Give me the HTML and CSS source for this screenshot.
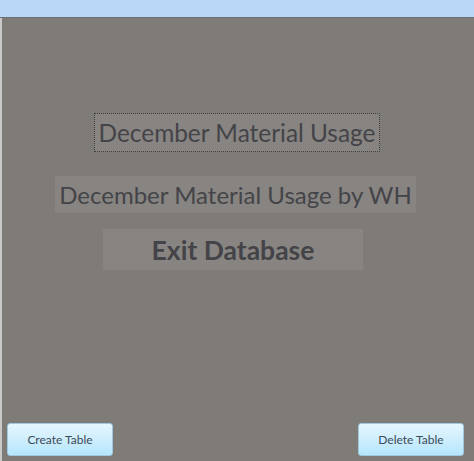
FILE: index.html
```html
<!DOCTYPE html>
<html>
<head>
<meta charset="utf-8">
<link rel="stylesheet" href="styles.css">
</head>
<body>
<div class="titlebar"></div>
<div class="main">
  <div class="menu">
    <div class="menu-btn focused first">December Material Usage</div>
    <div class="menu-btn second">December Material Usage by WH</div>
    <div class="menu-btn exit">Exit Database</div>
  </div>
  <div class="footer">
    <div class="cmd-btn">Create Table</div>
    <div class="cmd-btn">Delete Table</div>
  </div>
</div>
</body>
</html>
```
FILE: styles.css
```css
html, body {
  margin: 0;
  padding: 0;
  width: 474px;
  height: 461px;
  overflow: hidden;
  background: #7f7b76;
  font-family: Lato, "Open Sans", sans-serif;
}
.titlebar {
  height: 18px;
  background: #b9d8f8;
  border-bottom: 1px solid #6e6f72;
  box-sizing: border-box;
}
.main {
  height: 443px;
  box-sizing: border-box;
  border-left: 2px solid #c9c9c9;
  display: flex;
  flex-direction: column;
  justify-content: space-between;
  padding: 95px 10px 5px 5px;
}
.menu {
  display: flex;
  flex-direction: column;
  align-items: center;
}
.menu-btn {
  box-sizing: border-box;
  background: #878482;
  color: #444448;
  font-size: 24.4px;
  display: flex;
  align-items: center;
  justify-content: center;
  white-space: nowrap;
}
.first {
  width: 286px;
  height: 39px;
  border: 1px dotted #3c3c3c;
  margin-left: 3px;
}
.second {
  width: 361px;
  height: 37px;
  margin-top: 24px;
  font-size: 24px;
}
.exit {
  width: 260px;
  height: 41px;
  margin-top: 16px;
  margin-left: -5px;
  font-weight: bold;
  font-size: 26.5px;
}
.footer {
  display: flex;
  justify-content: space-between;
}
.cmd-btn {
  width: 106px;
  height: 33px;
  box-sizing: border-box;
  border: 1px solid #9fc7dd;
  border-radius: 3px;
  background: linear-gradient(#e6f6fe, #b5e6fc);
  color: #3d4a57;
  font-size: 12px;
  display: flex;
  align-items: center;
  justify-content: center;
}
```
